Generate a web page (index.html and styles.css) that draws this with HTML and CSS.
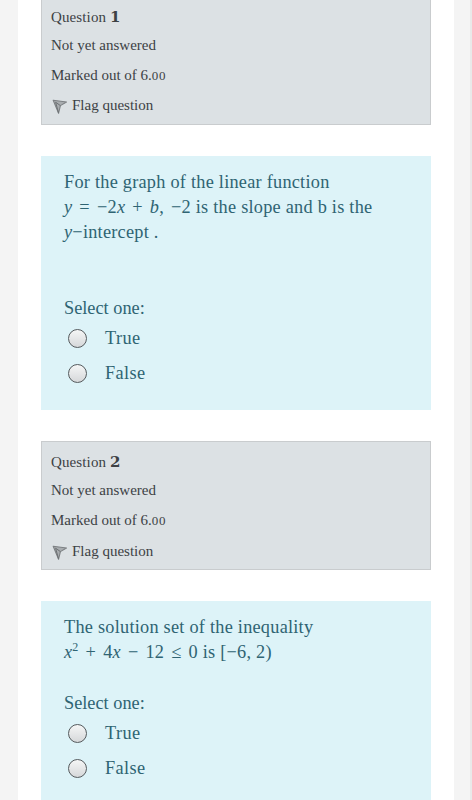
FILE: index.html
```html
<!DOCTYPE html>
<html lang="en">
<head>
<meta charset="utf-8">
<title>Quiz</title>
<link rel="stylesheet" href="styles.css">
</head>
<body>
<main class="page">
  <section class="info first">
    <h3 class="qno">Question <b>1</b></h3>
    <div class="state">Not yet answered</div>
    <div class="grade">Marked out of 6.<span class="os">00</span></div>
    <div class="flag"><svg class="flag-icon" viewBox="0 0 16 16"><path d="M1.2 1.2 14.5 3 8.4 6.6 6.6 14.2Z" fill="#a9adb0" stroke="#7d8184" stroke-width="1.1" stroke-linejoin="round"/><path d="M3.6 3.2 6.6 14.2M3.6 3.2 8.4 6.6" stroke="#6e7275" stroke-width="1" fill="none"/></svg><span>Flag question</span></div>
  </section>
  <section class="content tall">
    <p class="qtext">For the graph of the linear function<br><span class="m"><i>y</i> = −2<i>x</i> + <i>b</i>, −2</span> is the slope and b is the<br><i>y</i>−intercept .</p>
    <div class="prompt p1">Select one:</div>
    <div class="opt"><span class="radio"></span><span>True</span></div>
    <div class="opt"><span class="radio"></span><span>False</span></div>
  </section>
  <section class="info second">
    <h3 class="qno">Question <b>2</b></h3>
    <div class="state">Not yet answered</div>
    <div class="grade">Marked out of 6.<span class="os">00</span></div>
    <div class="flag"><svg class="flag-icon" viewBox="0 0 16 16"><path d="M1.2 1.2 14.5 3 8.4 6.6 6.6 14.2Z" fill="#a9adb0" stroke="#7d8184" stroke-width="1.1" stroke-linejoin="round"/><path d="M3.6 3.2 6.6 14.2M3.6 3.2 8.4 6.6" stroke="#6e7275" stroke-width="1" fill="none"/></svg><span>Flag question</span></div>
  </section>
  <section class="content">
    <p class="qtext">The solution set of the inequality<br><span class="m"><i>x</i><sup>2</sup> + 4<i>x</i> − 12 ≤ 0</span> is [−6, 2)</p>
    <div class="prompt p2">Select one:</div>
    <div class="opt"><span class="radio"></span><span>True</span></div>
    <div class="opt"><span class="radio"></span><span>False</span></div>
  </section>
</main>
</body>
</html>
```
FILE: styles.css
```css
html, body { margin: 0; padding: 0; height: 800px; overflow: hidden; }
body {
  background: linear-gradient(to right, #f4f4f4 0, #f4f4f4 470px, #e9e9e9 470px);
  font-family: "Liberation Serif", serif;
}
.page {
  box-sizing: border-box;
  width: 436px;
  height: 805px;
  margin: -5px 0 0 18px;
  padding: 0 23px;
  background: #fff;
  overflow: hidden;
}
.info {
  box-sizing: border-box;
  height: 130px;
  background: #dce1e4;
  border: 1px solid #c9ccce;
  padding: 11px 9px 0;
  color: #3d4144;
  font-size: 15px;
}
.second { height: 129px; padding-top: 10px; }
.second .grade { height: 31px; }
.qno { margin: 0; font-size: 15px; font-weight: 400; line-height: 20px; height: 28px; letter-spacing: 0.12px; }
.qno b { font-family: "DejaVu Serif", serif; font-size: 15px; }
.state { line-height: 20px; height: 30px; }
.grade { line-height: 20px; height: 30px; }
.os { font-size: 13px; letter-spacing: 0.7px; }
.flag { display: flex; align-items: center; line-height: 20px; padding-left: 1px; }
.flag-icon { width: 16px; height: 16px; margin-right: 4px; margin-top: 3px; }
.content {
  box-sizing: border-box;
  margin-top: 31px;
  height: 254px;
  background: #ddf3f8;
  padding: 14px 23px 0;
  color: #2f6473;
  font-size: 18.3px;
}
.content.tall { margin-bottom: 31px; }
.qtext { margin: 0; line-height: 25px; letter-spacing: 0.24px; }
.m { word-spacing: 2.2px; }
sup { font-size: 12px; line-height: 0; }
.prompt { line-height: 25px; }
.p1 { margin-top: 51px; }
.p2 { margin-top: 26px; }
.opt { display: flex; align-items: center; height: 35px; padding-left: 4px; letter-spacing: 0.4px; }
.radio {
  box-sizing: border-box;
  width: 19px;
  height: 19px;
  margin-right: 18px;
  border-radius: 50%;
  border: 1.5px solid #555a5d;
  background: linear-gradient(#f5f6f6, #d6d8da);
}
```
